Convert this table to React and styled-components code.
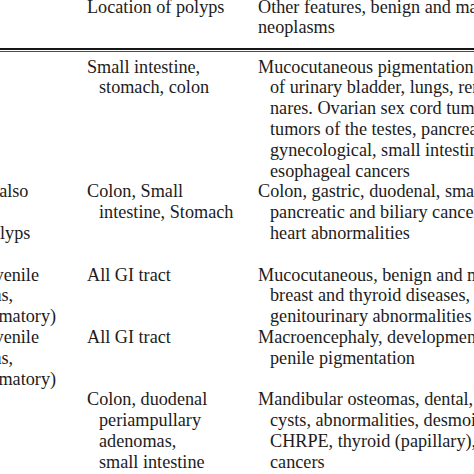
import React from 'react';
import styled, { createGlobalStyle } from 'styled-components';

const GlobalStyle = createGlobalStyle`
  html, body {
    margin: 0;
    padding: 0;
    background: #fff;
    overflow: hidden;
  }
  body {
    font-family: "Liberation Serif", "Times New Roman", serif;
    color: #1c1c1c;
  }
`;

const Table = styled.div`
  margin-top: -3.5px;
  margin-left: -61px;
  width: 600px;
`;

const Row = styled.div`
  display: grid;
  grid-template-columns: 148px 171px max-content;
  padding-bottom: ${props => props.$extra ? '20.8px' : '0'};
`;

const Cell = styled.div`
  font-size: 18.2px;
  line-height: 20.8px;
  white-space: nowrap;
`;

const Line = styled.div`
  padding-left: ${props => props.$indent ? '12px' : '0'};
`;

const Rule = styled.div`
  height: 1px;
  margin: 10px 0 4.5px 0;
  border-top: 2px solid #151515;
  border-bottom: 1px solid #4a4a4a;
`;

const header = [
  [],
  ['Location of polyps'],
  ['Other features, benign and malignant', 'neoplasms'],
];

const rows = [
  {
    cells: [
      [],
      ['Small intestine,', 'stomach, colon'],
      [
        'Mucocutaneous pigmentation, tumors',
        'of urinary bladder, lungs, renal pelvis,',
        'nares. Ovarian sex cord tumors,',
        'tumors of the testes, pancreatic,',
        'gynecological, small intestine,',
        'esophageal cancers',
      ],
    ],
  },
  {
    extra: true,
    cells: [
      ['Polyps (also', 'called', 'and polyps'],
      ['Colon, Small', 'intestine, Stomach'],
      [
        'Colon, gastric, duodenal, small intestine,',
        'pancreatic and biliary cancers,',
        'heart abnormalities',
      ],
    ],
  },
  {
    cells: [
      ['(e.g., juvenile', 'lipomas,', 'inflammatory)'],
      ['All GI tract'],
      [
        'Mucocutaneous, benign and malignant',
        'breast and thyroid diseases, GI,',
        'genitourinary abnormalities',
      ],
    ],
  },
  {
    cells: [
      ['(e.g., juvenile', 'lipomas,', 'inflammatory)'],
      ['All GI tract'],
      ['Macroencephaly, developmental delay,', 'penile pigmentation'],
    ],
  },
  {
    cells: [
      [],
      ['Colon, duodenal', 'periampullary', 'adenomas,', 'small intestine'],
      [
        'Mandibular osteomas, dental, epidermoid',
        'cysts, abnormalities, desmoid tumors,',
        'CHRPE, thyroid (papillary), colorectal',
        'cancers',
      ],
    ],
  },
];

function App() {
  return (
    <>
      <GlobalStyle />
      <Table>
        <Row>
          {header.map((lines, i) => (
            <Cell key={i}>
              {lines.map((text, j) => (
                <Line key={j}>{text}</Line>
              ))}
            </Cell>
          ))}
        </Row>
        <Rule />
        {rows.map((row, r) => (
          <Row key={r} $extra={row.extra}>
            {row.cells.map((lines, i) => (
              <Cell key={i}>
                {lines.map((text, j) => (
                  <Line key={j} $indent={j > 0}>{text}</Line>
                ))}
              </Cell>
            ))}
          </Row>
        ))}
      </Table>
    </>
  );
}

export default App;
